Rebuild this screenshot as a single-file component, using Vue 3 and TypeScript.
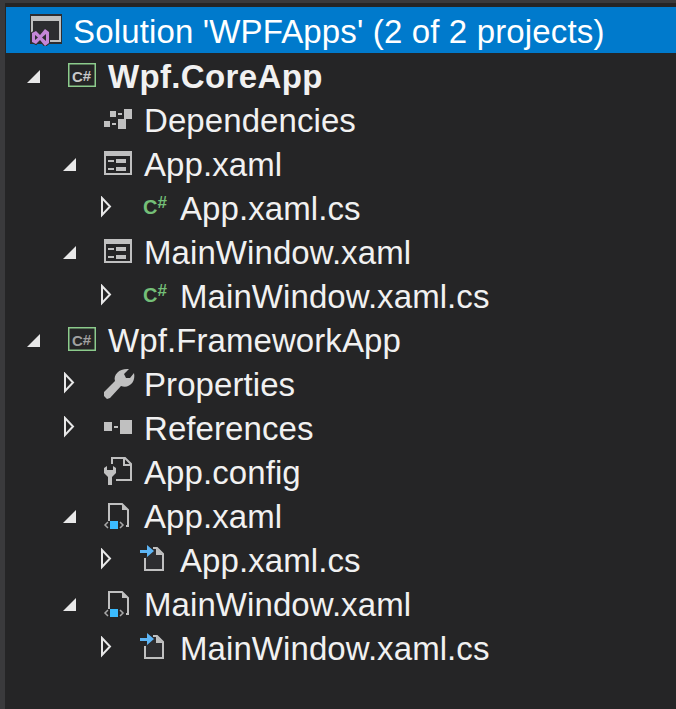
<script setup lang="ts">
type Arrow = 'open' | 'filled' | 'none'
type Icon = 'project' | 'projectOld' | 'deps' | 'form' | 'cs' | 'wrench' | 'refs' | 'config' | 'xaml' | 'code'
interface Row { label: string; depth: number; arrow: Arrow; icon: Icon; bold?: boolean }

const rows: Row[] = [
  { label: 'Wpf.CoreApp', depth: 0, arrow: 'filled', icon: 'project', bold: true },
  { label: 'Dependencies', depth: 1, arrow: 'none', icon: 'deps' },
  { label: 'App.xaml', depth: 1, arrow: 'filled', icon: 'form' },
  { label: 'App.xaml.cs', depth: 2, arrow: 'open', icon: 'cs' },
  { label: 'MainWindow.xaml', depth: 1, arrow: 'filled', icon: 'form' },
  { label: 'MainWindow.xaml.cs', depth: 2, arrow: 'open', icon: 'cs' },
  { label: 'Wpf.FrameworkApp', depth: 0, arrow: 'filled', icon: 'projectOld' },
  { label: 'Properties', depth: 1, arrow: 'open', icon: 'wrench' },
  { label: 'References', depth: 1, arrow: 'open', icon: 'refs' },
  { label: 'App.config', depth: 1, arrow: 'none', icon: 'config' },
  { label: 'App.xaml', depth: 1, arrow: 'filled', icon: 'xaml' },
  { label: 'App.xaml.cs', depth: 2, arrow: 'open', icon: 'code' },
  { label: 'MainWindow.xaml', depth: 1, arrow: 'filled', icon: 'xaml' },
  { label: 'MainWindow.xaml.cs', depth: 2, arrow: 'open', icon: 'code' },
]
</script>

<template>
  <div class="panel">
    <div class="tree">
      <div class="solution">
        <svg class="sol-icon" width="32" height="32" viewBox="0 0 32 32">
          <path d="M0 0H32V30H0Z" fill="#2d2d30" />
          <path fill-rule="evenodd" d="M1 2H31V28H1Z M3 7V26H29V7Z" fill="#c0c0c0" />
          <path fill-rule="evenodd" d="M2 19L6 17L10 21L15 15L19 18V29L15 32L10 26L6 30L2 28Z M5 21V26L8 23.5Z M12 23.5L16 20V27Z" fill="#c586d8" stroke="#2d2d30" stroke-width="2" paint-order="stroke" />
        </svg>
        <span class="label sol-label">Solution 'WPFApps' (2 of 2 projects)</span>
      </div>
      <div v-for="(row, i) in rows" :key="i" class="row" :class="'depth-' + row.depth">
        <svg class="arrow" width="14" height="22" viewBox="0 0 14 22">
          <path v-if="row.arrow === 'filled'" d="M0 19H13V6Z" fill="#e8e8e8" />
          <path v-else-if="row.arrow === 'open'" d="M2 2V19L10 10.5Z" fill="none" stroke="#e8e8e8" stroke-width="2" />
        </svg>
        <svg class="icon" width="34" height="32" viewBox="0 0 34 32">
          <template v-if="row.icon === 'project' || row.icon === 'projectOld'">
            <rect x="2.75" y="4.75" width="26.5" height="22.5" fill="none" stroke="#8ccb8c" stroke-width="1.5" />
            <text x="6" y="23" class="cs-in" :class="{ dim: row.icon === 'projectOld' }">C<tspan dy="-1">#</tspan></text>
          </template>
          <template v-else-if="row.icon === 'deps'">
            <path d="M2 18H8V24H2Z M8 8H14V14H8Z M16 16H24V26H16Z M22 6H30V16H22Z M10 20H14V22H10Z M16 10H20V12H16Z" fill="#c0c0c0" />
          </template>
          <template v-else-if="row.icon === 'form'">
            <path fill-rule="evenodd" d="M2 4H30V28H2Z M4 9V26H28V9Z" fill="#c0c0c0" />
            <path d="M6 13H12V15H6Z M14 12H24V16H14Z M6 21H12V23H6Z M14 20H24V24H14Z" fill="#c0c0c0" />
          </template>
          <template v-else-if="row.icon === 'cs'">
            <text x="5" y="23" class="cs-file">C<tspan class="cs-hash" dy="-6">#</tspan></text>
          </template>
          <template v-else-if="row.icon === 'wrench'">
            <path d="M5 32L2 29V25L13 14C11 7 18 1 27 2L22 7L24 11L28 11L32 6C34 15 27 22 19 19L8 31Z" fill="#c0c0c0" />
          </template>
          <template v-else-if="row.icon === 'refs'">
            <path d="M2 11H10V20H2Z M12 15H16V17H12Z M18 9H30V23H18Z" fill="#c0c0c0" />
          </template>
          <template v-else-if="row.icon === 'config'">
            <path d="M10 9V3H23L29 9V25H14" fill="none" stroke="#c0c0c0" stroke-width="2" />
            <path d="M22 3V10H29" fill="none" stroke="#c0c0c0" stroke-width="2" />
            <path d="M2 13V18L6 22V30H10V22L14 18V13L11 11V15H5V11Z" fill="#c0c0c0" />
          </template>
          <template v-else-if="row.icon === 'xaml'">
            <path d="M7 22V5H20L26 11V27H24" fill="none" stroke="#c0c0c0" stroke-width="2" />
            <path d="M20 5V11H26Z" fill="#c0c0c0" />
            <path d="M6 23L3 26L6 29 M18 23L21 26L18 29" fill="none" stroke="#a8a8a8" stroke-width="1.5" />
            <rect x="8" y="22" width="8" height="8" fill="#3bbcff" />
          </template>
          <template v-else>
            <path d="M7 15V27H25V11L19 5H15" fill="#2d2d30" stroke="#c0c0c0" stroke-width="2" />
            <path d="M18 5V12H25Z" fill="#c0c0c0" />
            <path d="M2 7H9V2L16 8L9 14V10H2Z" fill="#5db5f5" />
          </template>
        </svg>
        <span class="label" :class="{ bold: row.bold }">{{ row.label }}</span>
      </div>
    </div>
  </div>
</template>

<style scoped>
.panel {
  box-sizing: border-box;
  width: 676px;
  height: 709px;
  padding: 7px 0 0 6px;
  background: linear-gradient(#3a3a3c, #3a3a3c) top / 100% 3px no-repeat,
    linear-gradient(#3a3a3c, #3a3a3c) left / 5px 100% no-repeat, #252526;
  font-family: "Liberation Sans", Arial, sans-serif;
  font-size: 33px;
  color: #f1f1f1;
}
.tree {
  display: flex;
  flex-direction: column;
}
.solution {
  display: flex;
  align-items: center;
  height: 46px;
  padding-left: 24px;
  background: #007acc;
  color: #fff;
}
.sol-icon {
  flex: none;
  margin-right: 11px;
}
.row {
  display: flex;
  align-items: center;
  height: 44px;
}
.depth-0 { padding-left: 21px; }
.depth-1 { padding-left: 57px; }
.depth-2 { padding-left: 94px; }
.arrow {
  flex: none;
  margin-right: 25px;
}
.depth-2 .arrow { margin-right: 24px; }
.icon {
  flex: none;
  margin-right: 8px;
}
.label {
  padding-top: 4px;
  white-space: nowrap;
  letter-spacing: 0.08px;
}
.sol-label {
  letter-spacing: 0.15px;
}
.bold {
  font-weight: 700;
  letter-spacing: 0.35px;
}
.cs-in {
  font: 700 15px "Liberation Sans", sans-serif;
  fill: #c8c8c8;
}
.cs-in.dim {
  fill: #a0a0a0;
}
.cs-file {
  font: 700 20px "Liberation Sans", sans-serif;
  fill: #74bf78;
}
.cs-hash {
  font-size: 17px;
}
</style>
